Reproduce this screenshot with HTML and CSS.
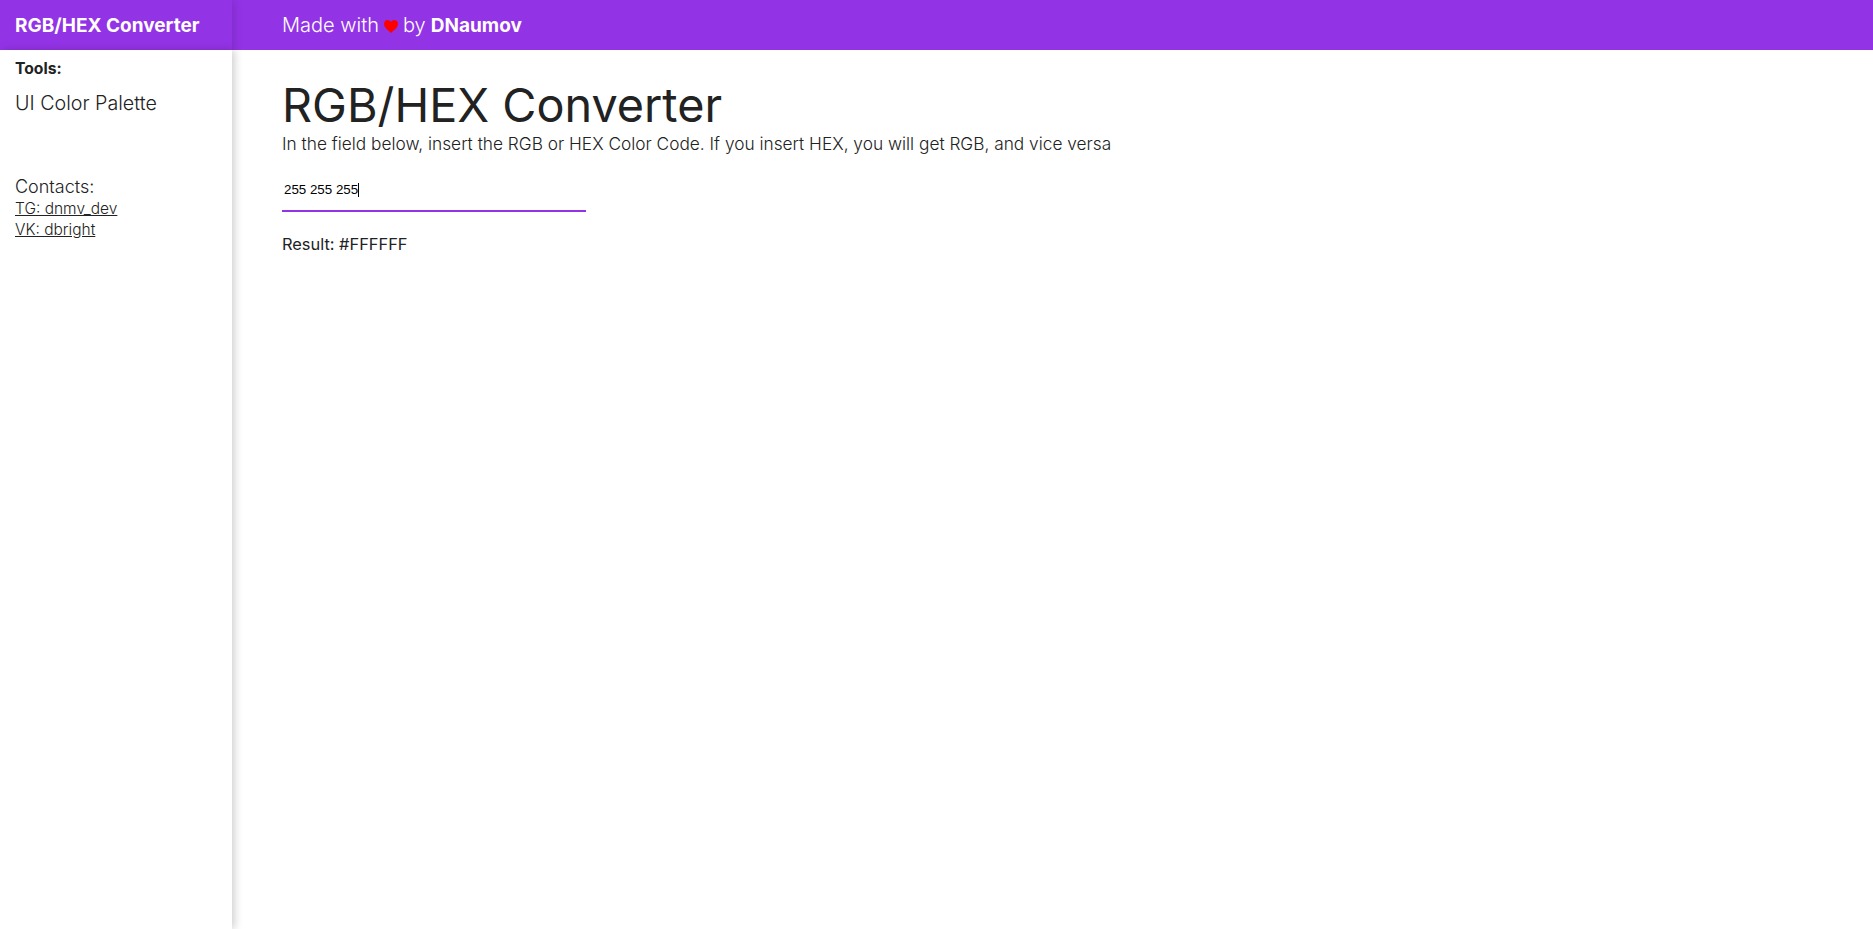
FILE: index.html
```html
<!DOCTYPE html>
<html lang="en">
<head>
    <meta charset="UTF-8">
    <meta name="viewport" content="width=device-width, initial-scale=1.0">
    <title>RGB/HEX Converter</title>
    <link rel="stylesheet" href="styles.css">
</head>
<body>
    <header class="header">
        <div class="brand">RGB/HEX Converter</div>
        <div class="credits">
            Made with
            <svg class="heart" viewBox="0 0 24 22" aria-hidden="true">
                <path d="M12 22C10 19.500 0 13.500 0 6.500C0 2.500 3 0 6.300 0C8.700 0 10.800 1.300 12 3.300C13.200 1.300 15.300 0 17.700 0C21 0 24 2.500 24 6.500C24 13.500 14 19.500 12 22Z"/>
            </svg>
            by <b>DNaumov</b>
        </div>
    </header>
    <div class="page">
        <aside class="sidebar">
            <div class="side-title">Tools:</div>
            <a class="tool-link" href="#">UI Color Palette</a>
            <div class="contacts">
                <div class="contacts-title">Contacts:</div>
                <a class="contact-link" href="#">TG: dnmv_dev</a>
                <a class="contact-link" href="#">VK: dbright</a>
            </div>
        </aside>
        <main class="content">
            <h1 class="title">RGB/HEX Converter</h1>
            <p class="hint">In the field below, insert the RGB or HEX Color Code. If you insert HEX, you will get RGB, and vice versa</p>
            <div class="field-wrap">
                <input class="field" type="text" value="255 255 255">
                <span class="caret"></span>
            </div>
            <div class="result">Result: #FFFFFF</div>
        </main>
    </div>
</body>
</html>
```
FILE: styles.css
```css
* {
    box-sizing: border-box;
}

html, body {
    height: 100%;
}

body {
    display: flex;
    flex-direction: column;
    margin: 0;
    font-family: Inter, "Noto Sans", sans-serif;
    background: #fff;
    color: #222;
    overflow: hidden;
}

.header {
    display: flex;
    align-items: center;
    flex: 0 0 50px;
    background: #9333e6;
    color: #fff;
    overflow: hidden;
}

.brand {
    display: flex;
    align-items: center;
    width: 232px;
    height: 100%;
    padding-left: 15px;
    font-size: 19px;
    font-weight: 700;
    box-shadow: 3px 0 8px rgba(0, 0, 0, 0.12);
}

.credits {
    display: flex;
    align-items: center;
    gap: 5px;
    padding-left: 50px;
    font-size: 20px;
    font-weight: 300;
}

.credits b {
    font-size: 19px;
    font-weight: 700;
}

.heart {
    width: 14px;
    height: 13px;
    margin-top: 2px;
    fill: #f00;
}

.page {
    display: flex;
    flex: 1;
}

.sidebar {
    width: 232px;
    padding: 9px 15px 0;
    box-shadow: 3px 0 8px rgba(0, 0, 0, 0.18);
}

.side-title {
    font-size: 15.7px;
    font-weight: 700;
    line-height: 20px;
}

.tool-link {
    display: block;
    margin-top: 12px;
    font-size: 19.7px;
    font-weight: 300;
    line-height: 24px;
    color: #222;
    text-decoration: none;
}

.contacts {
    margin-top: 61px;
}

.contacts-title {
    font-size: 18px;
    font-weight: 300;
    line-height: 22px;
}

.contact-link {
    display: block;
    font-size: 15.5px;
    font-weight: 300;
    line-height: 21px;
    color: #222;
}

.content {
    flex: 1;
    padding: 28px 50px 0;
}

.title {
    margin: 0;
    font-size: 46.75px;
    font-weight: 400;
    line-height: 54px;
}

.hint {
    margin: 1px 0 0;
    font-size: 17.3px;
    font-weight: 300;
    line-height: 22px;
}

.field-wrap {
    position: relative;
    width: 304px;
    margin-top: 18px;
}

.field {
    display: block;
    width: 100%;
    height: 39px;
    padding: 0 2px 5px;
    border: none;
    border-bottom: 2px solid #9333e6;
    outline: none;
    font-family: "Liberation Sans", Arial, sans-serif;
    font-size: 13.333px;
    color: #000;
}

/* text cursor, the field is photographed while focused */
.caret {
    position: absolute;
    top: 10px;
    left: 76px;
    width: 1px;
    height: 14px;
    background: #000;
}

.result {
    margin-top: 21px;
    font-size: 16.4px;
    font-weight: 400;
    line-height: 22px;
    color: #222;
}
```
